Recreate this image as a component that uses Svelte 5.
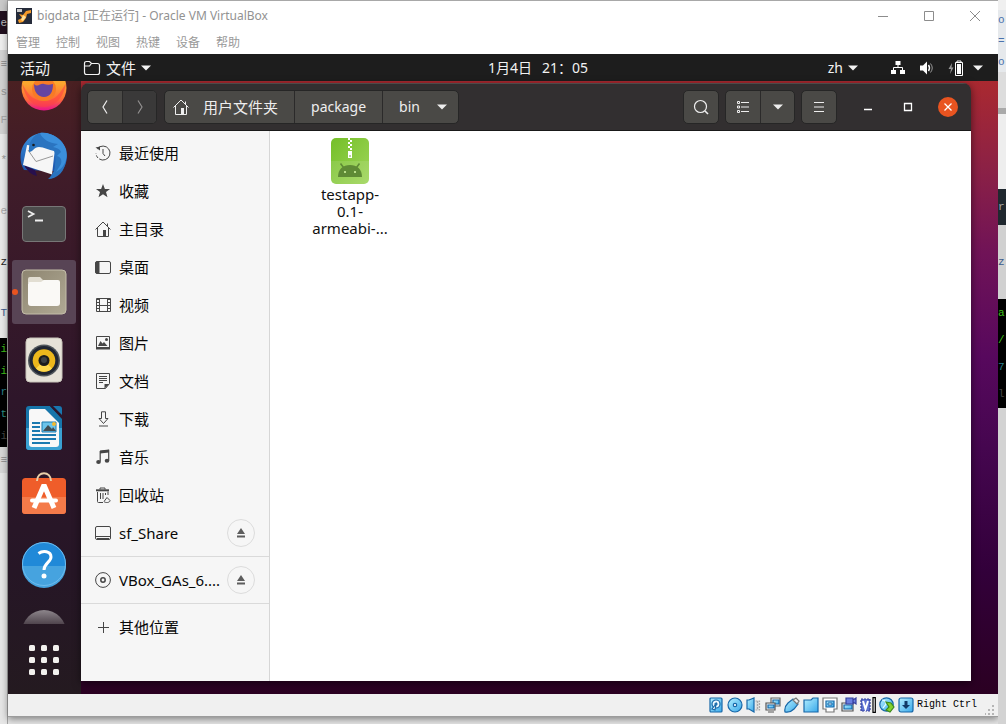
<script>
  const leftStrip = [
    { h: 11, bg: '#c9c9c9', lines: [] },
    { h: 23, bg: '#21101f', lines: [{ t: 'e', c: '#bbbbbb' }] },
    { h: 16, bg: '#eeeeee', lines: [] },
    { h: 84, bg: '#d2d2d2', lines: [{ t: '≡', c: '#888888' }, { t: 's', c: '#999999' }, { t: 'F', c: '#a5a5a5' }] },
    { h: 204, bg: '#e9e9e9', lines: [{ t: '*', c: '#999999' }, { t: 'e', c: '#aaaaaa' }, { t: 'z', c: '#222222' }, { t: 'T', c: '#3a5a8c' }] },
    { h: 109, bg: '#000000', lines: [{ t: 'i', c: '#3fbf1a' }, { t: 'i', c: '#3fbf1a' }, { t: 'r', c: '#2a7f8c' }, { t: 't', c: '#2a8c80' }, { t: 'i', c: '#444444' }] },
    { h: 26, bg: '#d6d6d6', lines: [{ t: '≡', c: '#888888' }] },
    { h: 0, bg: '#e6e6e6', lines: [] }
  ];
  const rightStrip = [
    { h: 10, bg: '#f0f0f0', lines: [] },
    { h: 62, bg: '#e6e9ec', lines: [{ t: 'o', c: '#4a72ad' }, { t: '=', c: '#4a72ad' }, { t: 'o', c: '#4a72ad' }] },
    { h: 36, bg: '#dddddd', lines: [] },
    { h: 6, bg: '#aaaaaa', lines: [] },
    { h: 75, bg: '#eeeeee', lines: [] },
    { h: 36, bg: '#20282f', lines: [{ t: 'r', c: '#aaaaaa' }] },
    { h: 74, bg: '#d1d1d1', lines: [{ t: 'z', c: '#3a5a8c' }] },
    { h: 109, bg: '#000000', lines: [{ t: 'a', c: '#3fbf1a' }, { t: '/', c: '#3fbf1a' }, { t: '7', c: '#2a7f8c' }, { t: 'l', c: '#444444' }] },
    { h: 0, bg: '#d3d3d3', lines: [] }
  ];
  const menus = ['管理', '控制', '视图', '热键', '设备', '帮助'];
  const places = [
    ['recent', '最近使用'], ['star', '收藏'], ['home', '主目录'], ['desktop', '桌面'], ['video', '视频'],
    ['picture', '图片'], ['document', '文档'], ['download', '下载'], ['music', '音乐'], ['trash', '回收站']
  ];
  const apps = [
    ['firefox', 'Firefox'], ['mail', 'Thunderbird'], ['terminal', '终端'], ['files', '文件'], ['rhythm', 'Rhythmbox'],
    ['writer', 'LibreOffice Writer'], ['software', 'Software'], ['help', '帮助'], ['disc', 'Disc']
  ];
  const indicators = ['disk', 'optical', 'audio', 'network', 'usb', 'shared', 'display', 'record', 'cpu', 'mouse', 'key'];
</script>

{#snippet strip(segments, side)}
  <div class="strip {side}" aria-hidden="true">
    {#each segments as s}
      <div class="segment" class:rest={!s.h} style="height:{s.h}px;background:{s.bg}">
        {#each s.lines as l}<span style="color:{l.c}">{l.t}</span>{/each}
      </div>
    {/each}
  </div>
{/snippet}

{#snippet caret()}
  <svg width="10" height="6" viewBox="0 0 10 6"><path d="M0 0.5h10L5 5.5z" fill="currentColor" /></svg>
{/snippet}

{#snippet glyph(name)}
  <svg width="16" height="16" viewBox="0 0 16 16" fill="none" stroke="currentColor">
    {#if name === 'recent'}
      <path d="M2.500 3.700A7 7 0 1 1 1 8.500" stroke-dasharray="32 1.500 3 1.500 3 1.500" /><path d="M0.500 2.500L5 1.500v4z" fill="currentColor" stroke="none" /><path d="M8 4v4.500l2 2.500" />
    {:else if name === 'star'}
      <path d="M8 1l1.900 4.900H15l-4 3.200 1.500 5.100L8 11.200l-4.500 3L5 9.100 1 5.900h5.100z" fill="currentColor" stroke="none" />
    {:else if name === 'home'}
      <path d="M.5 8.500L8 1l7.500 7.500M2.500 7v8.500h11V7M12.500 5V2.500" /><path d="M8 9h3v6.500H8z" fill="currentColor" stroke="none" />
    {:else if name === 'desktop'}
      <rect x=".5" y="2.500" width="15" height="12" rx="1.500" /><path d="M1 3h3v11H1z" fill="currentColor" />
    {:else if name === 'video'}
      <path d="M1.500 1.500h14v13h-14zM4.500 1.500v13M12.500 1.500v13M4.500 8.500h8" /><path d="M3 2v13M14 2v13" stroke-dasharray="1 2" stroke-width="2" />
    {:else if name === 'picture'}
      <path d="M1.500 1.500h13v12h-13z" /><path d="M1 12h14v2.500H1zM3 11l2.500-5 2 2.500L9 7l3.500 4z" fill="currentColor" stroke="none" /><circle cx="11.500" cy="4.500" r="1.500" fill="currentColor" stroke="none" />
    {:else if name === 'document'}
      <path d="M1.500.5h13v10l-4 5h-9zM4 3.500h8M4 5.500h8M4 7.500h8M4 9.500h4" /><path d="M9.500 15.500V11h5z" fill="currentColor" stroke="none" />
    {:else if name === 'download'}
      <path d="M6.500.8h4v6.700H13l-4.500 5-4.500-5h2.500zM4 15h9" />
    {:else if name === 'music'}
      <path d="M5.200 12.500v-10l8.500-1v10" stroke-width="1.200" /><path d="M5 1.500l9-1v3l-9 1z" fill="currentColor" stroke="none" /><ellipse cx="3.500" cy="13" rx="2.300" ry="2" fill="currentColor" stroke="none" /><ellipse cx="12" cy="11.800" rx="2.300" ry="2" fill="currentColor" stroke="none" />
    {:else if name === 'trash'}
      <path d="M5 2.500V1h5v1.500M2.500 5v9.500a1 1 0 0 0 1 1H8M5.500 6v6M8 6v6M10.500 6v2M13 4.500V8" /><path d="M1 2.300h13v2H1z" fill="currentColor" stroke="none" /><path d="M9 14.500l3-4 3 3c0 2.500-5 2.500-6 1z" />
    {:else if name === 'drive'}
      <rect x=".5" y="1.500" width="15" height="13" rx="1.500" /><path d="M.5 11.500h15M2 13.500h12" />
    {:else if name === 'cd'}
      <circle cx="8" cy="8" r="7.400" /><circle cx="8" cy="8" r="2.200" stroke-width="1.500" />
    {:else if name === 'plus'}
      <path d="M8.500 3v11M3 8.500h11" />
    {:else if name === 'search'}
      <circle cx="7.500" cy="7.500" r="6" stroke-width="1.200" /><path d="M12 12l3 3" stroke-width="1.600" />
    {:else if name === 'list'}
      <path d="M2.500 2.500h2v2h-2zM2.500 7h2v2h-2zM2.500 11.500h2v2h-2zM6 3.500h8M6 8h8M6 12.500h8" />
    {:else if name === 'menu'}
      <path d="M3 3.500h10M3 8h10M3 12.500h10" />
    {/if}
  </svg>
{/snippet}

{#snippet ejectButton(label)}
  <button class="eject" aria-label={label}>
    <svg width="10" height="10" viewBox="0 0 10 10" fill="#5d5d5d"><path d="M5 0l4 6H1zM1 7.500h8v2H1z" /></svg>
  </button>
{/snippet}

{#snippet appIcon(name)}
  <svg width="48" height="48" viewBox="0 0 48 48">
    {#if name === 'firefox'}
      <circle cx="24" cy="24" r="22.500" fill="url(#ff)" /><path d="M2 19C5 35 14 43 24 43s20-9 22-24c-6 10-10 18-22 18S7 29 2 19z" fill="#ff3f45" opacity=".55" /><circle cx="24" cy="25" r="12" fill="#f77b25" /><path d="M14 20c4 4 6-1 10 0 3 1 5 1 9 0 0 8-3 13-9 13s-10-5-10-13z" fill="#6545a0" />
    {:else if name === 'mail'}
      <path d="M3 14C7 7 12 2 22 1c12 0 24 9 25 23 0 12-9 21-18 23l5-8L4 38C-1 30 0 20 3 14z" fill="url(#tb)" />
      <path d="M4 33c3 6 8 10 13 11l-2-6z" fill="#27104e" />
      <path d="M7 13l28 3.500-3 26L3 33z" fill="#f6f6f6" /><path d="M8 18l8 11.500L33 24" fill="none" stroke="#999" stroke-width="1" />
      <path d="M9 20C8 11 13 3 20 1c8-1 17 3 22 9 6 8 6 24-2 32-3 3-8 5-12 5 5-4 7-9 7-15 1-5 1-10-1-13-5-1-10-4-15-4-5 0-6 5-10 5z" fill="#2a74c0" /><path d="M20 1c2 6 9 10 18 11l-5 3c4 1 7 2 8 5l-4 4c4 1 5 4 4 8l-5 8c10-5 12-15 10-23C43 8 31-1 20 1z" fill="#3b8fdb" /><circle cx="13.500" cy="13" r="1.300" fill="#1b1b1b" />
    {:else if name === 'terminal'}
      <rect x="2.500" y="6.500" width="43" height="35" rx="3.500" fill="#4c4c4c" stroke="#777" /><path d="M8 11l5.500 3L8 17M15 20.500h8" fill="none" stroke="#eee" stroke-width="1.800" />
    {:else if name === 'files'}
      <rect x="2" y="2" width="44" height="44" rx="4" fill="url(#fl)" stroke="#c3bda9" /><path d="M8 15v-4a2 2 0 0 1 2-2h10l3 3h15v6z" fill="#e2ded2" /><path d="M8 16q0-2 2-2h11l3-2h14q2 0 2 2v21q0 3-3 3H11q-3 0-3-3z" fill="#faf9f6" />
    {:else if name === 'rhythm'}
      <rect x="6" y="2" width="36" height="44" rx="4" fill="#e6e2d8" stroke="#c8c4ba" /><circle cx="24" cy="24.500" r="16" fill="#50565b" /><circle cx="24" cy="24.500" r="14.500" fill="#202632" /><circle cx="24" cy="24.500" r="11.300" fill="#ecb71c" /><path d="M16 32.500a11.300 11.300 0 0 0 16 0l-8-8z" fill="#ffd94d" /><circle cx="24" cy="24.500" r="5.500" fill="#1c1c1c" /><circle cx="24" cy="24" r="3" fill="#3d4245" />
    {:else if name === 'writer'}
      <path d="M9 2h21l12 12v29q0 3-3 3H9q-3 0-3-3V5q0-3 3-3z" fill="#1675aa" /><path d="M6 24h36v19q0 3-3 3H9q-3 0-3-3z" fill="#3aa1d2" /><path d="M29 1h5l8 9v5z" fill="#2c162b" /><path d="M33 2h6q3 0 3 3v6z" fill="#1877b0" /><path d="M11 5h14l14 14v21q0 3-3 3H12q-3 0-3-3V7q0-2 2-2z" fill="#f8f8f8" />
      <path d="M12 19h8M12 23h8M12 27h8M12 31h24M12 35h24M12 39h18" stroke="#1b7ab0" stroke-width="2" /><path d="M22 18h14v10H22z" fill="#6bc4eb" stroke="#1b7ab0" /><path d="M23 27l5-6 4 4 1-2 3 4z" fill="#414d52" /><circle cx="34" cy="20" r="2" fill="#f2b92f" />
    {:else if name === 'software'}
      <rect x="2" y="6" width="44" height="36" rx="3.500" fill="#ef5d2a" /><path d="M2 25h44v13.500a3.500 3.500 0 0 1-3.500 3.500h-37A3.500 3.500 0 0 1 2 38.500z" fill="#f47a49" /><path d="M17 9C17-1.500 31-1.500 31 9" fill="none" stroke="#e9cfa9" stroke-width="2" /><path d="M14 36l10-23 10 23" fill="none" stroke="#fff" stroke-width="5" stroke-linejoin="bevel" /><path d="M12 28.500h24" stroke="#fff" stroke-width="4" stroke-linecap="round" />
    {:else if name === 'help'}
      <circle cx="24" cy="24" r="22" fill="#2089d8" /><path d="M2 26a22 22 0 0 0 44 0z" fill="#46a3df" /><circle cx="24" cy="24" r="21.500" fill="none" stroke="#6fbced" /><path d="M18.500 13.500C23 10 31 11 31 17c0 5-7 6-7 13" fill="none" stroke="#fff" stroke-width="3" /><circle cx="24" cy="36" r="2.500" fill="#fff" />
    {:else}
      <circle cx="24" cy="24" r="22" fill="url(#dc)" />
    {/if}
  </svg>
{/snippet}

{#snippet indicator(name)}
  <svg width="16" height="16" viewBox="0 0 16 16" fill="url(#st)" stroke="#1767a8" stroke-width="1.200">
    {#if name === 'disk'}
      <rect x="2" y="1" width="12" height="14" rx="1" /><circle cx="8" cy="7" r="4" fill="#eef9ff" /><path d="M8 7l-4 5 3 1z" fill="#fff" /><circle cx="8" cy="7" r="1" />
    {:else if name === 'optical'}
      <circle cx="8" cy="8" r="7" /><circle cx="8" cy="8" r="1.700" fill="#fff" />
    {:else if name === 'audio'}
      <path d="M1 3h2l5-2v14l-5-3H1z" /><path d="M9.500 4h4v9h-4M11.500 4v9" stroke="#aaa" fill="#ddd" stroke-dasharray="2 1" />
    {:else if name === 'network'}
      <path d="M6 1h9v8H6z" fill="#eee" stroke="#666" /><path d="M8 3h6v4H8z" /><path d="M1 6h9v7H1zM3 15h6" fill="#eee" stroke="#555" /><path d="M3 8h6v3H3z" />
    {:else if name === 'usb'}
      <path d="M1 15q-1-5 3-9l5-4 5 5-4 5q-4 4-9 3z" /><path d="M9 3l3-2 3 3-2 3z" fill="#eee" stroke="#777" />
    {:else if name === 'shared'}
      <path d="M1 3h7l2-2h5v14H1z" />
    {:else if name === 'display'}
      <path d="M1 1h14v11h-3v3H4v-3H1z" fill="#fff" stroke="#777" /><path d="M4 4h8v6H4z" /><path d="M6 6h4v2H6z" fill="#fff" stroke-width="1" />
    {:else if name === 'record'}
      <path d="M1 6h11v8H1z" fill="#eee" stroke="#555" /><path d="M3 8h8v4H3z" /><path d="M5 1h7v6H5zM12 3l3-2v6l-3-2z" fill="#6b7ee0" stroke="#353e9c" />
    {:else if name === 'cpu'}
      <path d="M1 2h9v12H1z" fill="#5c70cf" stroke="#353e9c" stroke-dasharray="2 1" /><path d="M3 4l2.500 8L8 4" fill="none" stroke="#fff" stroke-width="2" /><path d="M13 .7h2.300v14.600H13z" fill="#fff" stroke="#000" />
    {:else if name === 'mouse'}
      <circle cx="7.500" cy="7.500" r="6.700" /><path d="M3 3q4 0 4 4l-3 4" fill="none" stroke="#eaffff" /><path d="M7 5l5 1 3 4-4 5-4-2 3-3z" fill="#84d22d" stroke="#3c891c" />
    {:else}
      <rect x="1" y="1" width="14" height="14" rx="2" /><path d="M6.500 4h3v4H12l-4 4-4-4h2.500z" fill="#123a66" stroke="none" />
    {/if}
  </svg>
{/snippet}

<svg class="defs" width="0" height="0" aria-hidden="true">
  <defs>
    <linearGradient id="ff" x1="0" y1="0" x2="0" y2="1"><stop offset=".4" stop-color="#fba72e" /><stop offset=".75" stop-color="#ff6a38" /><stop offset="1" stop-color="#e9128b" /></linearGradient>
    <linearGradient id="tb" x1="0" y1="0" x2="0" y2="1"><stop offset="0" stop-color="#3a91dc" /><stop offset="1" stop-color="#1747a0" /></linearGradient>
    <linearGradient id="fl" x1="0" y1="0" x2="1" y2="1"><stop offset="0" stop-color="#8d8570" /><stop offset="1" stop-color="#b0a994" /></linearGradient>
    <linearGradient id="dc" x1="0" y1="0" x2="0" y2="1"><stop offset="0" stop-color="#8d868c" /><stop offset=".4" stop-color="#40343d" /></linearGradient>
    <linearGradient id="st" x1="0" y1="0" x2="1" y2="1"><stop offset="0" stop-color="#b5efff" /><stop offset="1" stop-color="#38a8ea" /></linearGradient>
    <linearGradient id="apk" x1="0" y1="0" x2="1" y2="1"><stop offset="0" stop-color="#74bf28" /><stop offset="1" stop-color="#a0d65b" /></linearGradient>
  </defs>
</svg>

<div class="host">
  {@render strip(leftStrip, 'left')}

  <main class="vm">
    <header class="titlebar">
      <svg width="16" height="16" viewBox="0 0 16 16"><path d="M0 0h16v16H0z" fill="#252b3a" /><path d="M1 1h5v3H1z" fill="#ccc" /><path d="M3 6l4 1 3-4 5-1v3l-4 1-1 4-3 4-4 1-1-3 4-2z" fill="#f59a28" /><path d="M7 7l3 2-3 4-2-1z" fill="#ffe19a" /></svg>
      <h1>bigdata [正在运行] - Oracle VM VirtualBox</h1>
      <div class="window-buttons">
        <button aria-label="最小化"><svg width="12" height="12" viewBox="0 0 12 12"><path d="M1 6.500h10" /></svg></button>
        <button aria-label="最大化"><svg width="12" height="12" viewBox="0 0 12 12"><path d="M1.500 1.500h9v9h-9z" /></svg></button>
        <button aria-label="关闭"><svg width="12" height="12" viewBox="0 0 12 12"><path d="M1 1l10 10M11 1L1 11" /></svg></button>
      </div>
    </header>
    <nav class="menubar">
      {#each menus as m}<button>{m}</button>{/each}
    </nav>

    <div class="guest">
      <div class="topbar">
        <div class="top-left">
          <button>活动</button>
          <button class="app-menu">
            <svg width="18" height="16" viewBox="0 0 18 16" fill="none" stroke="currentColor"><path d="M1.500 12.500v-9q0-2 2-2h3l2 2h6q2 0 2 2v7q0 2-2 2h-11q-2 0-2-2zM1.500 6h5l2-2.500" stroke-width="1.200" /></svg>
            文件 {@render caret()}
          </button>
        </div>
        <button class="clock"><span>1月4日</span><span>21：05</span></button>
        <div class="top-right">
          <button class="lang">zh {@render caret()}</button>
          <button class="system" aria-label="系统菜单">
            <span class="tray">
              <svg width="16" height="16" viewBox="0 0 16 16" fill="#fff"><path d="M5.500 1h5v4h-5zM1 10h5v4H1zM10 10h5v4h-5z" /><path d="M8 5v3M3.500 10V7.500h9V10" fill="none" stroke="#fff" /></svg>
              <svg width="16" height="16" viewBox="0 0 16 16"><path d="M1 5.500h3l4-4v13l-4-4H1z" fill="#fff" /><path d="M9.500 5q2 3 0 6" fill="none" stroke="#fff" stroke-width="1.400" /><path d="M11.500 3.500q3.500 4.500 0 9" fill="none" stroke="#999" /></svg>
              <svg width="16" height="16" viewBox="0 0 16 16"><path d="M4 3L.5 9H3l-1 5 3.500-6.500H3.500z" fill="#999" /><path d="M7.500 2.500h7v13h-7zM9 1h4v1.500H9z" fill="none" stroke="#fff" /><path d="M9 4h4v10H9z" fill="#fff" /></svg>
            </span>
            {@render caret()}
          </button>
        </div>
      </div>

      <div class="desktop">
        <aside class="dock">
          <div class="apps">
            {#each apps as [id, label]}
              <button class:active={id === 'files'} aria-label={label}>{@render appIcon(id)}</button>
            {/each}
          </div>
          <button class="launcher" aria-label="显示应用程序">
            <svg width="32" height="32" viewBox="0 0 32 32" fill="#f2f1ee">
              {#each [1, 13, 25] as y}{#each [1, 13, 25] as x}<rect {x} {y} width="6" height="6" rx="1.500" />{/each}{/each}
            </svg>
          </button>
        </aside>

        <section class="files">
          <header class="headerbar">
            <div class="group history">
              <button aria-label="后退"><svg width="16" height="16" viewBox="0 0 16 16"><path d="M10 1.500L6 8l4 6.500" /></svg></button>
              <button aria-label="前进" disabled><svg width="16" height="16" viewBox="0 0 16 16"><path d="M6 1.500L10 8l-4 6.500" /></svg></button>
            </div>
            <div class="group path">
              <button class="cjk">{@render glyph('home')}用户文件夹</button>
              <button>package</button>
              <button class="current">bin {@render caret()}</button>
            </div>
            <div class="tools">
              <div class="group"><button aria-label="搜索">{@render glyph('search')}</button></div>
              <div class="group"><button aria-label="列表视图">{@render glyph('list')}</button><button aria-label="视图选项">{@render caret()}</button></div>
              <div class="group"><button aria-label="菜单">{@render glyph('menu')}</button></div>
            </div>
            <div class="controls">
              <button aria-label="最小化"><svg width="10" height="10" viewBox="0 0 10 10"><path d="M1 7.500h8" /></svg></button>
              <button aria-label="最大化"><svg width="10" height="10" viewBox="0 0 10 10"><path d="M1.500 1.500h7v7h-7z" /></svg></button>
              <button class="close" aria-label="关闭"><svg width="10" height="10" viewBox="0 0 10 10"><path d="M1.500 1.500l7 7M8.500 1.500l-7 7" /></svg></button>
            </div>
          </header>

          <div class="body">
            <nav class="sidebar">
              {#each places as [icon, label]}
                <div class="row"><button class="place cjk">{@render glyph(icon)}<span>{label}</span></button></div>
              {/each}
              <div class="row"><button class="place">{@render glyph('drive')}<span>sf_Share</span></button>{@render ejectButton('弹出 sf_Share')}</div>
              <hr />
              <div class="row"><button class="place">{@render glyph('cd')}<span>VBox_GAs_6....</span></button>{@render ejectButton('弹出 VBox_GAs')}</div>
              <hr />
              <div class="row"><button class="place cjk">{@render glyph('plus')}<span>其他位置</span></button></div>
            </nav>
            <div class="content">
              <button class="file">
                <svg width="38" height="46" viewBox="0 0 38 46">
                  <rect width="38" height="46" rx="5" fill="url(#apk)" /><path d="M0 23h38v18a5 5 0 0 1-5 5H5a5 5 0 0 1-5-5z" fill="#fff" opacity=".1" />
                  <path d="M18 0v12M20 2v12" stroke="#fff" stroke-width="2" stroke-dasharray="2 2" /><path d="M17 13h4v7h-4z" fill="#fff" /><path d="M18.500 17h1v2h-1z" fill="#6fa83a" />
                  <path d="M7 39C7 31 12 27 19 27s12 4 12 12z" fill="#5f8b35" /><path d="M9.500 25.500l3 4M28.500 25.500l-3 4" stroke="#5f8b35" stroke-width="1.600" /><path d="M13 33h2v2h-2zM23 33h2v2h-2z" fill="#b9df89" />
                </svg>
                <span>testapp-<br />0.1-<br />armeabi-...</span>
              </button>
            </div>
          </div>
        </section>
      </div>
    </div>

    <footer class="statusbar">
      {#each indicators as i}{@render indicator(i)}{/each}
      <span>Right Ctrl</span>
      <svg class="grip" width="10" height="10" viewBox="0 0 10 10" fill="#b5b5b5"><path d="M7 0h2v2H7zM7 4h2v2H7zM7 8h2v2H7zM3 4h2v2H3zM3 8h2v2H3zM0 8h1v2H0z" /></svg>
    </footer>
  </main>

  {@render strip(rightStrip, 'right')}
</div>

<style>
  :global(body) { margin: 0; }
  * { box-sizing: border-box; }
  svg { display: block; flex: none; }
  .defs { position: absolute; }
  button { font: inherit; color: inherit; background: none; border: 0; padding: 0; margin: 0; display: flex; align-items: center; }

  .host {
    display: grid;
    grid-template-columns: 8px minmax(0, 1fr) 8px;
    min-height: 100vh;
    background: #e4e4e4;
    font: 14px/18px "Noto Sans", "Noto Sans CJK SC", sans-serif;
  }
  .strip { display: flex; flex-direction: column; overflow: hidden; font: 11px/14px "Liberation Mono", monospace; }
  .segment { display: flex; flex: none; flex-direction: column; justify-content: space-around; overflow: hidden; }
  .segment.rest { flex: 1; }
  .left { border-right: 1px solid #a5a5a5; }
  .left .segment { align-items: flex-end; }
  .right .segment { align-items: flex-start; }

  .vm {
    display: flex;
    flex-direction: column;
    margin-bottom: 7px;
    background: #fff;
    border-top: 1px solid #a8a8a8;
    border-bottom: 1px solid #9c9c9c;
    box-shadow: 0 2px 7px #00000070;
  }
  .titlebar { display: flex; align-items: center; gap: 5px; height: 29px; padding-left: 8px; color: #929292; }
  h1 { flex: 1; margin: 0; font: 12px/16px "Noto Sans", "Noto Sans CJK SC", sans-serif; }
  .window-buttons { display: flex; }
  .window-buttons button { width: 46px; height: 28px; justify-content: center; }
  .window-buttons svg { fill: none; stroke: #8c8c8c; }
  .menubar { display: flex; gap: 16px; height: 24px; padding-left: 8px; color: #999; font: 12px/18px "Noto Sans CJK SC", sans-serif; }

  .guest { flex: 1; display: flex; flex-direction: column; }
  .topbar { display: grid; grid-template-columns: 73px 1fr auto 1fr; align-items: center; height: 27px; padding: 0 15px 0 12px; background: #1d1d1d; color: #f2f2f2; }
  .top-left { grid-column: 1 / 3; display: flex; gap: 33px; font: 15px/20px "Noto Sans CJK SC", sans-serif; }
  .app-menu { gap: 5px; }
  .clock { gap: 10px; }
  .top-right { display: flex; justify-content: flex-end; gap: 32px; }
  .lang { gap: 5px; }
  .system { gap: 9px; }
  .tray { display: flex; gap: 13px; }

  .desktop {
    flex: 1;
    display: flex;
    background: linear-gradient(#aa2930, #8c2145 14%, #701357 28%, #57085d 45%, #45064f 60%, #32003a 80%, #2b0022);
  }
  .dock { display: flex; flex-direction: column; width: 73px; background: linear-gradient(#4a2022, #401c29 15%, #2e162a 52%, #261626 80%, #241a20); }
  .apps { flex: 1 1 0; height: 0; min-height: 543px; display: flex; flex-direction: column; gap: 4px; padding-left: 4px; overflow: hidden; }
  .apps button { position: relative; flex: none; width: 64px; height: 64px; justify-content: center; border-radius: 3px; }
  .apps button:first-child { margin-top: -25px; }
  .apps .active { background: #584455; }
  .active::before { content: ""; position: absolute; left: 0; width: 6px; height: 6px; border-radius: 50%; background: #e95420; }
  .launcher { height: 70px; padding: 2px 0 0 20px; }

  .files { flex: 1; display: flex; flex-direction: column; min-width: 0; margin: 2px 27px 13px 0; border-radius: 8px 8px 0 0; overflow: hidden; box-shadow: 0 2px 8px #0008; }
  .headerbar { display: flex; align-items: center; height: 48px; padding: 0 13px 0 6px; gap: 7px; background: #322f30; border-top: 1px solid #4d4a4a; border-bottom: 1px solid #191919; color: #eee; }
  .group { display: flex; height: 34px; border: 1px solid #262626; border-radius: 5px; background: #4a4946; overflow: hidden; }
  .group button { min-width: 34px; justify-content: center; }
  .group button + button { border-left: 1px solid #2b2a2a; }
  .history svg { fill: none; stroke: currentColor; stroke-width: 1.200; }
  .history button:disabled { background: #3a3939; color: #929090; }
  .path button { padding: 0 16px; }
  .path .cjk { padding: 0 16px 0 8px; gap: 14px; }
  .path .current { padding: 0 11px 0 16px; gap: 17px; }
  .cjk { font: 15px/20px "Noto Sans CJK SC", sans-serif; }
  .tools { display: flex; gap: 6px; margin-left: auto; }
  .controls { display: flex; gap: 20px; margin-left: 14px; }
  .controls button { width: 20px; height: 20px; justify-content: center; border-radius: 50%; }
  .controls svg { fill: none; stroke: #fff; stroke-width: 1.300; }
  .controls .close { background: #e95420; }

  .body { flex: 1; display: flex; background: #fff; }
  .sidebar { width: 189px; padding-top: 3px; background: #f6f6f6; border-right: 1px solid #d6d6d6; color: #080808; font-size: 15px; }
  .row { display: flex; align-items: center; height: 38px; padding: 0 14px; }
  .place { flex: 1; min-width: 0; gap: 8px; text-align: left; white-space: nowrap; }
  .place svg { color: #464646; }
  .eject { flex: none; width: 28px; height: 28px; justify-content: center; border: 1px solid #dcdcdc; border-radius: 50%; }
  hr { height: 1px; margin: 4px 0; border: 0; background: #dadada; }
  .content { flex: 1; padding: 7px 32px; }
  .file { flex-direction: column; width: 96px; gap: 2px; font-size: 15px; line-height: 17px; color: #111; text-align: center; }

  .statusbar { display: flex; align-items: center; justify-content: flex-end; gap: 3px; height: 22px; padding-right: 3px; background: #f0f0f0; font: 10px/14px "Liberation Mono", monospace; color: #000; }
  .grip { align-self: flex-end; margin: 0 0 1px 5px; }
</style>
